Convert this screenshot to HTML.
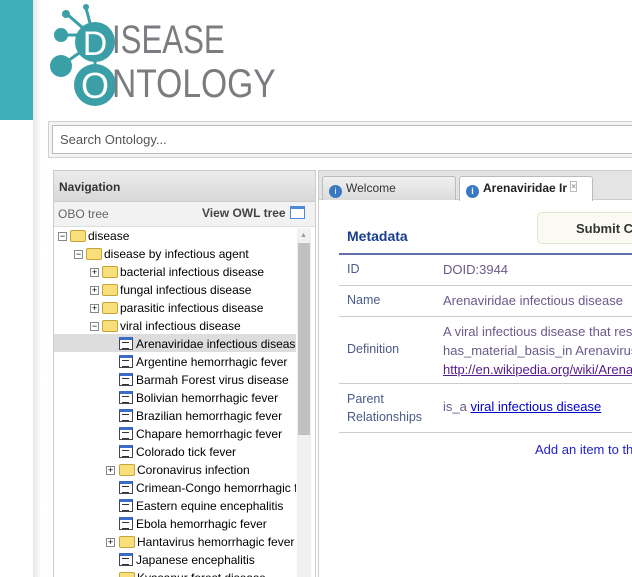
<!DOCTYPE html>
<html><head><style>
*{margin:0;padding:0;box-sizing:border-box}
html,body{width:632px;height:577px;overflow:hidden}
body{background:#fff;font-family:"Liberation Sans",Arial,sans-serif}
#w{position:relative;width:632px;height:577px;overflow:hidden}
.a{position:absolute}
.t{position:absolute;font-size:12px;color:#000;white-space:nowrap;line-height:18px}
.fold{display:inline-block;width:16px;height:12px;background:#f9df7c;border:1px solid #c8a437;border-radius:2px;vertical-align:-2px;margin-right:2px}
.doc{display:inline-block;width:14px;height:13px;border:1px solid #445;border-top:3px solid #3a6cc8;background:#fff;vertical-align:-2px;margin-right:3px;position:relative}
.doc:after{content:"";position:absolute;left:2px;top:2px;width:7px;height:5px;border-top:1px solid #333;border-bottom:1px solid #333}
.pm{position:absolute;width:9px;height:9px;border:1px solid #888;background:#fff;font-size:9px;line-height:7px;text-align:center;color:#000}
.lbl{position:absolute;left:347px;font-size:12.5px;color:#4a5a8a}
.val{position:absolute;left:443px;font-size:13px;color:#6a5a8a;white-space:nowrap}
.hr{position:absolute;left:339px;width:293px;height:1px;background:#ccc}
</style></head><body><div id="w">
<div class="a" style="left:0;top:0;width:33px;height:120px;background:#3fb0ba"></div>
<div class="a" style="left:33px;top:0;width:8px;height:577px;background:linear-gradient(to right,#e6e6e6,#fff)"></div>
<svg class="a" style="left:44px;top:3px" width="80" height="106">
<g stroke="#3a9fa6" stroke-width="3" fill="#3a9fa6">
<line x1="17" y1="32" x2="40" y2="32"/><line x1="24" y1="12" x2="40" y2="26"/><line x1="42" y1="5" x2="46" y2="20"/><line x1="18" y1="62" x2="38" y2="48"/><line x1="51" y1="58" x2="51" y2="66"/>
<circle cx="17" cy="32" r="7" stroke="none"/><circle cx="22" cy="11" r="4" stroke="none"/><circle cx="42" cy="4" r="3" stroke="none"/><circle cx="17" cy="63" r="11" stroke="none"/>
<circle cx="51" cy="39" r="20" stroke="none"/><circle cx="51" cy="82" r="21" stroke="none"/>
</g>
<text x="51" y="52" text-anchor="middle" font-family="Liberation Sans" font-size="34" fill="#fff">D</text>
<text x="51" y="95" text-anchor="middle" font-family="Liberation Sans" font-size="36" fill="#fff">O</text>
</svg>
<div class="a" style="left:112px;top:20px;font-size:40px;color:#7b7c80;line-height:40px;transform:scaleX(0.78);transform-origin:0 0">ISEASE</div>
<div class="a" style="left:112px;top:64px;font-size:40px;color:#7b7c80;line-height:40px;transform:scaleX(0.84);transform-origin:0 0">NTOLOGY</div>
<div class="a" style="left:48px;top:121px;width:590px;height:37px;border:1px solid #d0d0d0;background:#f4f4f4"></div>
<div class="a" style="left:52px;top:125px;width:590px;height:29px;border:1px solid #bbb;background:#fff;font-size:13px;color:#555;padding:6px 7px">Search Ontology...</div>
<div class="a" style="left:53px;top:170px;width:263px;height:420px;border:1px solid #ccc;background:#fff"></div>
<div class="a" style="left:54px;top:171px;width:261px;height:31px;background:linear-gradient(#ececec,#d8d8d8);border-bottom:1px solid #ccc;font-size:12px;font-weight:bold;color:#333;padding:9px 5px">Navigation</div>
<div class="a" style="left:54px;top:202px;width:261px;height:25px;background:#f2f2f2;border-bottom:1px solid #ddd"></div>
<div class="t" style="left:58px;top:205px;color:#666">OBO tree</div>
<div class="t" style="left:202px;top:204px;color:#444;font-weight:bold">View OWL tree</div>
<div class="a" style="left:290px;top:206px;width:15px;height:13px;border:1px solid #4b8ad6;border-top:3px solid #4b8ad6;background:#fff"></div>
<div class="a" style="left:54px;top:334px;width:242px;height:18px;background:#ddd"></div>
<div class="a" style="left:297px;top:228px;width:14px;height:350px;background:#f1f1f1"></div>
<div class="a" style="left:298px;top:243px;width:12px;height:192px;background:#c1c1c1"></div>
<div class="a" style="left:300px;top:232px;font-size:7px;color:#999">▲</div>
<div class="pm" style="left:58px;top:232px">−</div>
<div class="pm" style="left:74px;top:250px">−</div>
<div class="pm" style="left:90px;top:268px">+</div>
<div class="pm" style="left:90px;top:286px">+</div>
<div class="pm" style="left:90px;top:304px">+</div>
<div class="pm" style="left:90px;top:322px">−</div>
<div class="pm" style="left:106px;top:466px">+</div>
<div class="pm" style="left:106px;top:538px">+</div>
<div class="t" style="left:70px;top:227px"><span class="fold"></span>disease</div>
<div class="t" style="left:86px;top:245px"><span class="fold"></span>disease by infectious agent</div>
<div class="t" style="left:102px;top:263px"><span class="fold"></span>bacterial infectious disease</div>
<div class="t" style="left:102px;top:281px"><span class="fold"></span>fungal infectious disease</div>
<div class="t" style="left:102px;top:299px"><span class="fold"></span>parasitic infectious disease</div>
<div class="t" style="left:102px;top:317px"><span class="fold"></span>viral infectious disease</div>
<div style="position:absolute;left:119px;top:335px;width:177px;height:242px;overflow:hidden">
<div class="t" style="left:0;top:0"><span class="doc"></span>Arenaviridae infectious disease</div>
<div class="t" style="left:0;top:18px"><span class="doc"></span>Argentine hemorrhagic fever</div>
<div class="t" style="left:0;top:36px"><span class="doc"></span>Barmah Forest virus disease</div>
<div class="t" style="left:0;top:54px"><span class="doc"></span>Bolivian hemorrhagic fever</div>
<div class="t" style="left:0;top:72px"><span class="doc"></span>Brazilian hemorrhagic fever</div>
<div class="t" style="left:0;top:90px"><span class="doc"></span>Chapare hemorrhagic fever</div>
<div class="t" style="left:0;top:108px"><span class="doc"></span>Colorado tick fever</div>
<div class="t" style="left:0;top:126px"><span class="fold"></span>Coronavirus infection</div>
<div class="t" style="left:0;top:144px"><span class="doc"></span>Crimean-Congo hemorrhagic fever</div>
<div class="t" style="left:0;top:162px"><span class="doc"></span>Eastern equine encephalitis</div>
<div class="t" style="left:0;top:180px"><span class="doc"></span>Ebola hemorrhagic fever</div>
<div class="t" style="left:0;top:198px"><span class="fold"></span>Hantavirus hemorrhagic fever</div>
<div class="t" style="left:0;top:216px"><span class="doc"></span>Japanese encephalitis</div>
<div class="t" style="left:0;top:234px"><span class="fold"></span>Kyasanur forest disease</div>
</div>
<div class="a" style="left:318px;top:170px;width:320px;height:420px;border:1px solid #ccc;background:#fff"></div>
<div class="a" style="left:319px;top:171px;width:313px;height:29px;background:#e4e4e4;border-bottom:1px solid #ccc"></div>
<div class="a" style="left:322px;top:176px;width:134px;height:24px;border:1px solid #bbb;border-bottom:none;background:linear-gradient(#f0f0f0,#dcdcdc);font-size:12px;color:#333;padding:4px 6px;border-radius:3px 3px 0 0"><span style="display:inline-block;width:13px;height:13px;border-radius:50%;background:#3b78c4;color:#fff;font-size:9px;text-align:center;line-height:13px;vertical-align:-2px;margin-right:4px">i</span>Welcome</div>
<div class="a" style="left:459px;top:176px;width:134px;height:25px;border:1px solid #bbb;border-bottom:none;background:#fff;font-size:12px;font-weight:bold;color:#222;padding:4px 6px;border-radius:3px 3px 0 0;white-space:nowrap;overflow:hidden"><span style="display:inline-block;width:13px;height:13px;border-radius:50%;background:#3b78c4;color:#fff;font-size:9px;text-align:center;line-height:13px;vertical-align:-2px;margin-right:4px">i</span>Arenaviridae Ir <span style="font-size:8px;color:#999;border:1px solid #bbb;vertical-align:3px">×</span></div>
<div class="a" style="left:537px;top:212px;width:110px;height:32px;border:1px solid #e4e4d4;background:#fafaf2;border-radius:5px;font-size:13px;font-weight:bold;color:#333;padding:8px 38px;white-space:nowrap">Submit Change</div>
<div class="a" style="left:347px;top:228px;font-size:14px;font-weight:bold;color:#1a3d8f">Metadata</div>
<div class="a" style="left:339px;top:253px;width:293px;height:2px;background:#6470ad"></div>
<div class="lbl" style="top:262px">ID</div><div class="val" style="top:262px">DOID:3944</div>
<div class="hr" style="top:285px"></div>
<div class="lbl" style="top:293px">Name</div><div class="val" style="top:293px">Arenaviridae infectious disease</div>
<div class="hr" style="top:316px"></div>
<div class="lbl" style="top:342px">Definition</div>
<div class="val" style="top:322px;line-height:19px">A viral infectious disease that results<br>has_material_basis_in Arenavirus<br><span style="color:#551a8b;text-decoration:underline">http://en.wikipedia.org/wiki/Arenavirus</span></div>
<div class="hr" style="top:383px"></div>
<div class="lbl" style="top:390px;line-height:18px">Parent<br>Relationships</div>
<div class="val" style="top:399px">is_a <span style="color:#00c;text-decoration:underline">viral infectious disease</span></div>
<div class="hr" style="top:432px"></div>
<div class="a" style="left:535px;top:442px;font-size:13px;color:#22c;white-space:nowrap">Add an item to the</div>
</div></body></html>
